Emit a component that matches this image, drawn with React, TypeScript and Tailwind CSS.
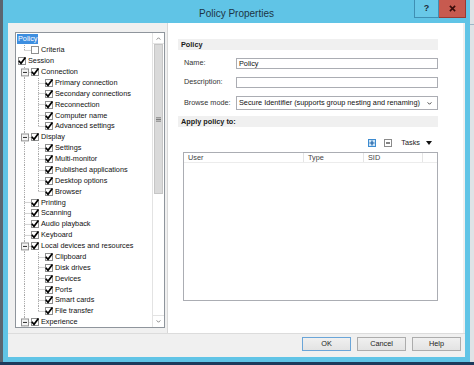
import React from 'react';

type GuideKind = 'pipe' | 'mid' | 'last';

type Row = {
  label: string;
  guides: GuideKind[];
  cb?: 'on' | 'off';
  expander?: boolean;
  selected?: boolean;
};

const pipeMid = (label: string): Row => ({ label, guides: ['pipe', 'mid'], cb: 'on' });

const rows: Row[] = [
  { label: 'Policy', guides: [], selected: true },
  { label: 'Criteria', guides: ['last'], cb: 'off' },
  { label: 'Session', guides: [], cb: 'on' },
  { label: 'Connection', guides: ['mid'], cb: 'on', expander: true },
  pipeMid('Primary connection'),
  pipeMid('Secondary connections'),
  pipeMid('Reconnection'),
  pipeMid('Computer name'),
  { label: 'Advanced settings', guides: ['pipe', 'last'], cb: 'on' },
  { label: 'Display', guides: ['mid'], cb: 'on', expander: true },
  pipeMid('Settings'),
  pipeMid('Multi-monitor'),
  pipeMid('Published applications'),
  pipeMid('Desktop options'),
  { label: 'Browser', guides: ['pipe', 'last'], cb: 'on' },
  { label: 'Printing', guides: ['mid'], cb: 'on' },
  { label: 'Scanning', guides: ['mid'], cb: 'on' },
  { label: 'Audio playback', guides: ['mid'], cb: 'on' },
  { label: 'Keyboard', guides: ['mid'], cb: 'on' },
  { label: 'Local devices and resources', guides: ['mid'], cb: 'on', expander: true },
  pipeMid('Clipboard'),
  pipeMid('Disk drives'),
  pipeMid('Devices'),
  pipeMid('Ports'),
  pipeMid('Smart cards'),
  { label: 'File transfer', guides: ['pipe', 'last'], cb: 'on' },
  { label: 'Experience', guides: ['mid'], cb: 'on', expander: true },
];

function Guide({ kind, expander }: { kind: GuideKind; expander?: boolean }) {
  return (
    <svg viewBox="0 0 14 11" preserveAspectRatio="none" className="w-[14px] self-stretch shrink-0">
      <line x1="7.5" y1="0" x2="7.5" y2={kind === 'last' ? 5.5 : 11} stroke="#a3a3a3" strokeWidth="1" strokeDasharray="1 1" />
      {kind !== 'pipe' && <line x1="7.5" y1="5.5" x2="14" y2="5.5" stroke="#a3a3a3" strokeWidth="1" strokeDasharray="1 1" />}
      {expander && (
        <g>
          <rect x="4.5" y="2" width="7" height="7" fill="#f4f4f4" stroke="#919191" strokeWidth="1" />
          <line x1="6" y1="5.5" x2="10" y2="5.5" stroke="#2b2b2b" strokeWidth="1" />
        </g>
      )}
    </svg>
  );
}

function CheckBox({ on }: { on: boolean }) {
  return (
    <span className="w-[8px] h-[8px] border border-[#8e8f8f] bg-white shrink-0 flex items-center justify-center">
      {on && (
        <svg viewBox="0 0 8 8" className="w-[8px] h-[8px] overflow-visible">
          <path d="M0.8 3.8 L3 6.3 L7.4 0.6" fill="none" stroke="#000" strokeWidth="1.7" />
        </svg>
      )}
    </span>
  );
}

function TreeRow({ row }: { row: Row }) {
  return (
    <div className="flex items-center h-[10.88px] whitespace-nowrap">
      {row.guides.map((g, i) => (
        <Guide key={i} kind={g} expander={i === row.guides.length - 1 && row.expander} />
      ))}
      {row.cb && (
        <span className={row.guides.length === 0 ? 'ml-[1px]' : ''}>
          <CheckBox on={row.cb === 'on'} />
        </span>
      )}
      {row.selected ? (
        <span className="bg-[#3d8ee0] text-white px-[1px] leading-[10px]">{row.label}</span>
      ) : (
        <span className="ml-[2px] leading-[10px]">{row.label}</span>
      )}
    </div>
  );
}

function ScrollBar() {
  return (
    <div className="w-[12px] border-l border-[#e3e3e3] flex flex-col bg-white">
      <div className="h-[11px] border-b border-[#e3e3e3] flex items-center justify-center">
        <svg viewBox="0 0 6 4" className="w-[5px] h-[3px]">
          <path d="M0.5 3.5 L3 1 L5.5 3.5" fill="none" stroke="#606060" strokeWidth="1" />
        </svg>
      </div>
      <div className="h-[150px] mx-[1px] bg-[#dadada] border border-[#c6c6c6] flex items-center justify-center">
        <svg viewBox="0 0 6 5" className="w-[5px] h-[5px]">
          <path d="M0 0.5 H6 M0 2.5 H6 M0 4.5 H6" stroke="#6a6a6a" strokeWidth="1" />
        </svg>
      </div>
      <div className="flex-1" />
      <div className="h-[12px] border-t border-[#e3e3e3] flex items-center justify-center">
        <svg viewBox="0 0 6 4" className="w-[5px] h-[3px]">
          <path d="M0.5 0.5 L3 3 L5.5 0.5" fill="none" stroke="#606060" strokeWidth="1" />
        </svg>
      </div>
    </div>
  );
}

function SectionHeader({ children }: { children: React.ReactNode }) {
  return <div className="h-[11px] bg-[#f0f0f0] px-[3px] font-bold leading-[11px] text-[#1a1a1a]">{children}</div>;
}

function Field({ label, value, mt }: { label: string; value?: string; mt: string }) {
  return (
    <div className={`flex items-center ${mt}`}>
      <span className="w-[58px] pl-[6px] text-[#333]">{label}</span>
      <div className="flex-1 h-[11px] border border-[#abadb3] bg-white px-[2px] leading-[9px]">{value}</div>
    </div>
  );
}

function DlgButton({ label, primary }: { label: string; primary?: boolean }) {
  return (
    <button
      className={`w-[49px] h-[14px] border ${primary ? 'border-[#6aa5d8]' : 'border-[#acacac]'} bg-gradient-to-b from-[#f0f0f0] to-[#e3e3e3] text-[#222] leading-[12px]`}
    >
      {label}
    </button>
  );
}

export default function App() {
  return (
    <div
      className="w-[474px] h-[365px] overflow-hidden flex flex-col bg-[#1d3a5c] text-[7.3px] text-[#111]"
      style={{ fontFamily: '"Liberation Sans", Arial, sans-serif' }}
    >
      <div className="h-[362px] flex">
        <div className="w-[3px] bg-[#5b6570]" />
        {/* window */}
        <div className="w-[467px] bg-[#60c4e6] flex flex-col">
          <div className="h-[23px] relative flex items-center justify-center">
            <span className="text-[10px] text-[#1c3444] mt-[3px]">Policy Properties</span>
            <div className="absolute right-[4px] top-0 flex">
              <div className="w-[25px] h-[18px] bg-[#68c8e8] border border-[#3f8fb3] border-t-0 flex items-center justify-center font-bold text-[9px] text-[#1d2d38]">
                ?
              </div>
              <div className="w-[27px] h-[18px] bg-[#c75a4f] border border-[#9a3a32] border-t-0 border-l-0 flex items-center justify-center">
                <svg viewBox="0 0 8 8" className="w-[7px] h-[7px]">
                  <path d="M1 1 L7 7 M7 1 L1 7" stroke="#3a0d0a" strokeWidth="1.8" />
                </svg>
              </div>
            </div>
          </div>

          {/* client */}
          <div className="mx-[5px] h-[334px] bg-[#f0f0f0] flex flex-col">
            <div className="h-[310px] flex">
              {/* left pane */}
              <div className="w-[159px] pl-[7px] pt-[9px]">
                <div className="w-[150px] h-[296px] border border-[#8f959c] bg-white flex">
                  <div className="flex-1 pl-[1px] pt-[1px] overflow-hidden">
                    {rows.map((r, i) => (
                      <TreeRow key={i} row={r} />
                    ))}
                  </div>
                  <ScrollBar />
                </div>
              </div>

              {/* right pane */}
              <div className="flex-1 mr-[2px] bg-white border-l border-[#d8d8d8] pl-[10px] pt-[16px]">
                <div className="w-[260px]">
                  <SectionHeader>Policy</SectionHeader>
                  <Field label="Name:" value="Policy" mt="mt-[8px]" />
                  <Field label="Description:" mt="mt-[8px]" />
                  <div className="flex items-center mt-[8px]">
                    <span className="w-[58px] pl-[6px] text-[#333]">Browse mode:</span>
                    <div className="flex-1 h-[14px] border border-[#abadb3] bg-white pl-[2px] pr-[5px] flex items-center justify-between whitespace-nowrap">
                      <span>Secure Identifier (supports group nesting and renaming)</span>
                      <svg viewBox="0 0 6 4" className="w-[5px] h-[3px]">
                        <path d="M0.5 0.5 L3 3 L5.5 0.5" fill="none" stroke="#333" strokeWidth="1.2" />
                      </svg>
                    </div>
                  </div>
                  <div className="mt-[6px]">
                    <SectionHeader>Apply policy to:</SectionHeader>
                  </div>
                  <div className="mt-[12px] h-[8px] flex items-center justify-end pr-[6px]">
                    <span className="w-[8px] h-[8px] border border-[#3d8bd0] bg-[#cfe6f8] flex items-center justify-center">
                      <svg viewBox="0 0 6 6" className="w-[6px] h-[6px]">
                        <path d="M3 0.5 V5.5 M0.5 3 H5.5" stroke="#1b5fa5" strokeWidth="1.2" />
                      </svg>
                    </span>
                    <span className="ml-[8px] w-[8px] h-[8px] border border-[#8a8a8a] bg-white flex items-center justify-center">
                      <svg viewBox="0 0 6 6" className="w-[6px] h-[6px]">
                        <path d="M1 3 H5" stroke="#333" strokeWidth="1.2" />
                      </svg>
                    </span>
                    <span className="ml-[9px] text-[#222]">Tasks</span>
                    <svg viewBox="0 0 6 4" className="ml-[6px] w-[6px] h-[4px]">
                      <path d="M0 0 H6 L3 4 Z" fill="#111" />
                    </svg>
                  </div>
                  <div className="mt-[5px] ml-[5px] h-[149px] border border-[#abadb3] bg-white">
                    <div className="h-[10px] flex border-b border-[#ececec] text-[#444] leading-[10px]">
                      <div className="w-[120px] pl-[4px] border-r border-[#e5e5e5]">User</div>
                      <div className="w-[60px] pl-[4px] border-r border-[#e5e5e5]">Type</div>
                      <div className="w-[59px] pl-[4px] border-r border-[#e5e5e5]">SID</div>
                      <div className="flex-1" />
                    </div>
                  </div>
                </div>
              </div>
            </div>

            {/* footer */}
            <div className="flex-1 border-t border-[#dcdcdc] flex justify-end items-start pt-[3px] pr-[4px] gap-[6px]">
              <DlgButton label="OK" primary />
              <DlgButton label="Cancel" />
              <DlgButton label="Help" />
            </div>
          </div>
          <div className="flex-1" />
        </div>
        <div className="flex-1 bg-[#dfe3e6] flex flex-col">
          <div className="h-[24px]" />
          <div className="h-[1px] bg-[#9fb6c6]" />
        </div>
      </div>
      <div className="flex-1 bg-[#1d3a5c]" />
    </div>
  );
}
